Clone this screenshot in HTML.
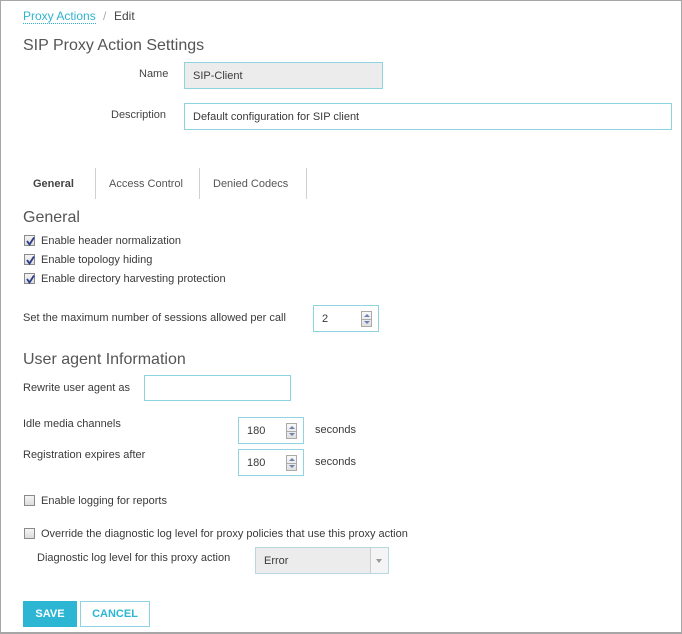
<!DOCTYPE html>
<html><head><style>
body{margin:0;width:682px;height:633px;position:relative;background:#fff;font-family:"Liberation Sans",sans-serif;color:#3a3a3a;overflow:hidden}
.frame{position:absolute;left:0;top:0;width:680px;height:631px;border:1px solid #a6a6a6;border-width:1px 2px 2px 1px;box-sizing:content-box}
.a{position:absolute;white-space:nowrap}
.s12{font-size:11px}
.inp{position:absolute;border:1px solid #8dd3e0;background:#fff;box-sizing:border-box;font-size:11px;padding-left:8px;display:flex;align-items:center}
.cb{position:absolute;width:11px;height:11px;border:1px solid #8a8a8a;background:linear-gradient(#f4f4f4,#dcdcdc);box-sizing:border-box;left:24px}
.cb svg{position:absolute;left:0;top:0}
.spin{position:absolute;right:6px;top:5px;width:11px;height:16px;border:1px solid #aaa;box-sizing:border-box;background:linear-gradient(#f8f8f8,#e0e0e0)}
.spin:before{content:"";position:absolute;left:2px;top:2px;border:3px solid transparent;border-bottom:3px solid #7080b0;border-top:0}
.spin:after{content:"";position:absolute;left:2px;bottom:2px;border:3px solid transparent;border-top:3px solid #7080b0;border-bottom:0}
.spin i{position:absolute;left:0;right:0;top:7px;border-top:1px solid #aaa}
.sep{position:absolute;top:168px;height:31px;border-left:1px solid #d0d0d0}
</style></head><body>
<div class="frame"></div>
<div class="a" style="left:23px;top:9px;font-size:12px;color:#2fb3cf;border-bottom:1px dotted #2fb3cf;line-height:14px">Proxy Actions</div>
<div class="a" style="left:103px;top:9px;font-size:12px;color:#aaa;line-height:14px">/</div>
<div class="a" style="left:114px;top:9px;font-size:12px;color:#444;line-height:14px">Edit</div>
<div class="a" style="left:23px;top:37px;font-size:16px;color:#555">SIP Proxy Action Settings</div>
<div class="a s12" style="left:139px;top:68px;color:#444">Name</div>
<div class="inp" style="left:184px;top:62px;width:199px;height:27px;background:#ececec">SIP-Client</div>
<div class="a s12" style="left:111px;top:109px;color:#444">Description</div>
<div class="inp" style="left:184px;top:103px;width:488px;height:27px">Default configuration for SIP client</div>
<div class="a s12" style="left:33px;top:178px;font-weight:bold;color:#444">General</div>
<div class="sep" style="left:95px"></div>
<div class="a s12" style="left:109px;top:178px;color:#555">Access Control</div>
<div class="sep" style="left:199px"></div>
<div class="a s12" style="left:213px;top:178px;color:#555">Denied Codecs</div>
<div class="sep" style="left:306px"></div>
<div class="a" style="left:23px;top:209px;font-size:16px;color:#555">General</div>
<div class="cb" style="top:235px"><svg width="11" height="11"><path d="M2 5 L4.5 8.5 L9 1.5" stroke="#2a3c8a" stroke-width="1.8" fill="none"/></svg></div>
<div class="a s12" style="left:41px;top:235px">Enable header normalization</div>
<div class="cb" style="top:254px"><svg width="11" height="11"><path d="M2 5 L4.5 8.5 L9 1.5" stroke="#2a3c8a" stroke-width="1.8" fill="none"/></svg></div>
<div class="a s12" style="left:41px;top:254px">Enable topology hiding</div>
<div class="cb" style="top:273px"><svg width="11" height="11"><path d="M2 5 L4.5 8.5 L9 1.5" stroke="#2a3c8a" stroke-width="1.8" fill="none"/></svg></div>
<div class="a s12" style="left:41px;top:273px">Enable directory harvesting protection</div>
<div class="a s12" style="left:23px;top:312px">Set the maximum number of sessions allowed per call</div>
<div class="inp" style="left:313px;top:305px;width:66px;height:27px">2<div class="spin"><i></i></div></div>
<div class="a" style="left:23px;top:351px;font-size:16px;color:#555">User agent Information</div>
<div class="a s12" style="left:23px;top:382px">Rewrite user agent as</div>
<div class="inp" style="left:144px;top:375px;width:147px;height:26px"></div>
<div class="a s12" style="left:23px;top:418px">Idle media channels</div>
<div class="inp" style="left:238px;top:417px;width:66px;height:27px">180<div class="spin"><i></i></div></div>
<div class="a s12" style="left:315px;top:424px">seconds</div>
<div class="a s12" style="left:23px;top:449px">Registration expires after</div>
<div class="inp" style="left:238px;top:449px;width:66px;height:27px">180<div class="spin"><i></i></div></div>
<div class="a s12" style="left:315px;top:456px">seconds</div>
<div class="cb" style="top:495px"></div>
<div class="a s12" style="left:41px;top:495px">Enable logging for reports</div>
<div class="cb" style="top:528px"></div>
<div class="a s12" style="left:41px;top:528px">Override the diagnostic log level for proxy policies that use this proxy action</div>
<div class="a s12" style="left:37px;top:552px">Diagnostic log level for this proxy action</div>
<div class="inp" style="left:255px;top:547px;width:134px;height:27px;background:#ececec;border-color:#b8d8e0">Error<div style="position:absolute;right:0;top:0;bottom:0;width:17px;border-left:1px solid #ccc;background:#f4f4f4"><div style="position:absolute;left:5px;top:11px;border:3px solid transparent;border-top:4px solid #999;border-bottom:0"></div></div></div>
<div class="a" style="left:23px;top:601px;width:54px;height:26px;background:#2cb6d3;color:#fff;font-size:11px;font-weight:bold;display:flex;align-items:center;justify-content:center">SAVE</div>
<div class="a" style="left:80px;top:601px;width:70px;height:26px;border:1px solid #8dd3e0;box-sizing:border-box;color:#2cb6d3;font-size:11px;font-weight:bold;display:flex;align-items:center;justify-content:center">CANCEL</div>
</body></html>
